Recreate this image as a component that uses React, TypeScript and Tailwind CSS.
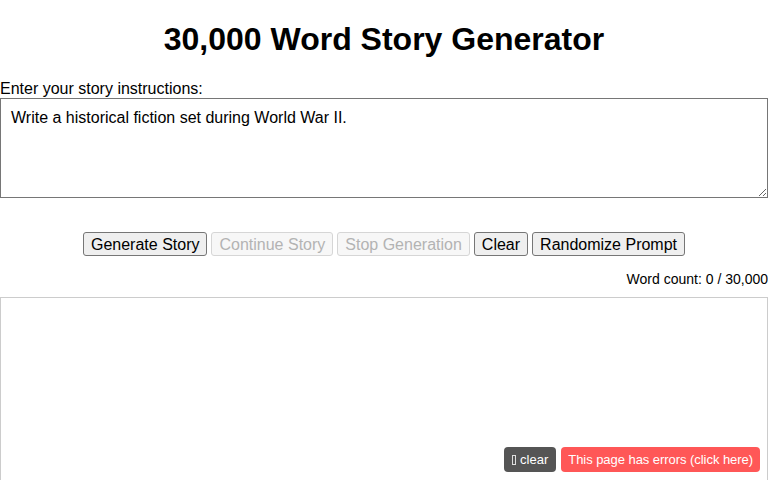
import { useState } from "react"

const buttons = [
  { label: "Generate Story", disabled: false },
  { label: "Continue Story", disabled: true },
  { label: "Stop Generation", disabled: true },
  { label: "Clear", disabled: false },
  { label: "Randomize Prompt", disabled: false },
]

export default function App() {
  const [prompt, setPrompt] = useState("Write a historical fiction set during World War II.")

  return (
    <div className="h-[480px] overflow-hidden bg-white text-black font-['Liberation_Sans',Arial,sans-serif] text-base leading-[normal]">
      <h1 className="text-[32px] font-bold text-center my-[21.44px] leading-[37px]">
        30,000 Word Story Generator
      </h1>

      <label htmlFor="prompt" className="block leading-[18px]">
        Enter your story instructions:
      </label>
      <textarea
        id="prompt"
        value={prompt}
        onChange={(e) => setPrompt(e.target.value)}
        className="block w-full h-[100px] border border-[#767676] p-[10px] text-base leading-[18px] bg-white outline-none"
      />

      {/* Controls */}
      <div className="flex justify-center gap-[4px] mt-[34px]">
        {buttons.map((b) => (
          <button
            key={b.label}
            disabled={b.disabled}
            className={
              b.disabled
                ? "h-[24px] px-[7px] text-base rounded-[3px] border border-[#d6d6d6] bg-[#f7f7f7] text-[#b3b3b3]"
                : "h-[24px] px-[7px] text-base rounded-[3px] border border-[#767676] bg-[#efefef] text-black"
            }
          >
            {b.label}
          </button>
        ))}
      </div>

      <div className="text-right text-sm leading-[16px] mt-[15px]">Word count: 0 / 30,000</div>

      {/* Output */}
      <div className="mt-[10px] border border-[#cccccc] h-[300px]" />

      <div className="fixed right-[8px] bottom-[8px] flex gap-[5px] text-[13px] leading-[15px]">
        <button className="h-[25px] px-[8px] rounded-[4px] bg-[#555555] text-white flex items-center gap-[4px]">
          <span className="inline-block w-[4px] h-[10px] border border-[#dddddd]" />
          clear
        </button>
        <button className="h-[25px] px-[7px] rounded-[4px] bg-[#ff5757] text-white tracking-[-0.05px]">
          This page has errors (click here)
        </button>
      </div>
    </div>
  )
}
